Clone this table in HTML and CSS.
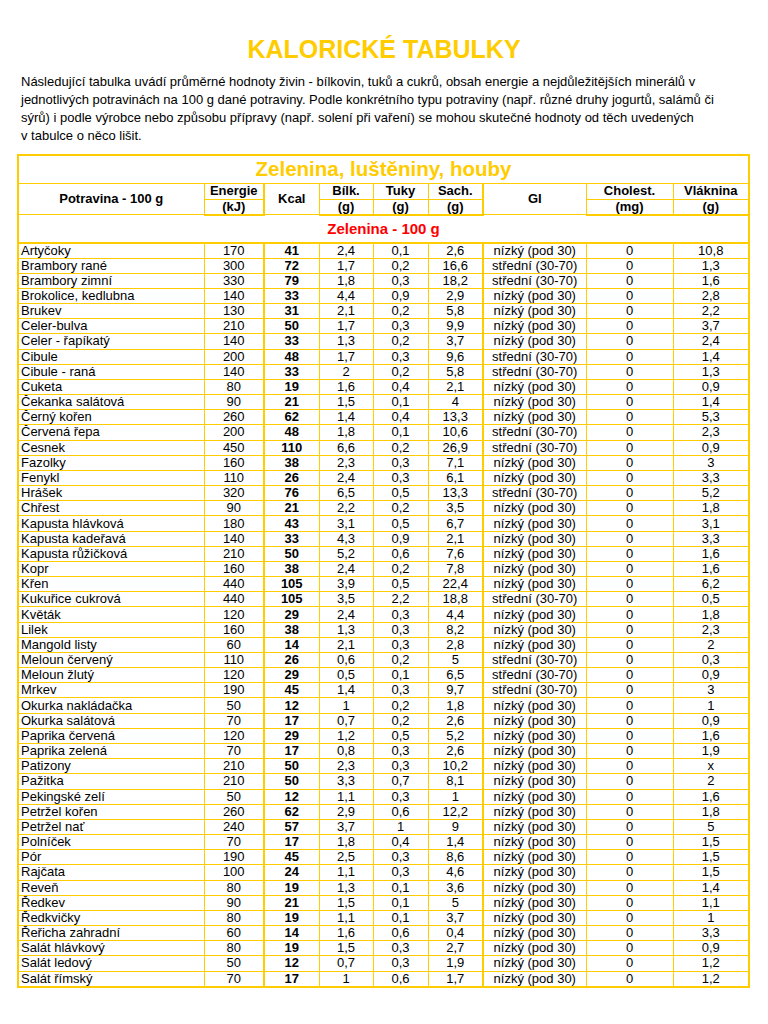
FILE: index.html
```html
<!DOCTYPE html>
<html lang="cs">
<head>
<meta charset="utf-8">
<title>Kalorické tabulky</title>
<link rel="stylesheet" href="styles.css">
</head>
<body>
<h1 class="title">KALORICKÉ TABULKY</h1>
<p class="intro">Následující tabulka uvádí průměrné hodnoty živin - bílkovin, tuků a cukrů, obsah energie a nejdůležitějších minerálů v<br>jednotlivých potravinách na 100 g dané potraviny. Podle konkrétního typu potraviny (např. různé druhy jogurtů, salámů či<br>sýrů) i podle výrobce nebo způsobu přípravy (např. solení při vaření) se mohou skutečné hodnoty od těch uvedených<br>v tabulce o něco lišit.</p>
<table class="food">
<colgroup>
<col class="c-name"><col class="c-kj"><col class="c-kcal"><col class="c-b"><col class="c-t"><col class="c-s"><col class="c-gi"><col class="c-ch"><col class="c-vl">
</colgroup>
<thead>
<tr class="cap-row"><th colspan="9" class="cap">Zelenina, luštěniny, houby</th></tr>
<tr class="h1-row">
<th rowspan="2">Potravina - 100 g</th>
<th class="thick">Energie</th>
<th rowspan="2">Kcal</th>
<th>Bílk.</th>
<th>Tuky</th>
<th class="thick">Sach.</th>
<th rowspan="2">GI</th>
<th>Cholest.</th>
<th>Vláknina</th>
</tr>
<tr class="h2-row">
<th class="thick">(kJ)</th>
<th>(g)</th>
<th>(g)</th>
<th class="thick">(g)</th>
<th>(mg)</th>
<th>(g)</th>
</tr>
</thead>
<tbody>
<tr class="sec-row"><td colspan="9" class="sec">Zelenina - 100 g</td></tr>
<tr><td class="n">Artyčoky</td><td class="thick">170</td><td class="b">41</td><td>2,4</td><td>0,1</td><td class="thick">2,6</td><td>nízký (pod 30)</td><td>0</td><td>10,8</td></tr>
<tr><td class="n">Brambory rané</td><td class="thick">300</td><td class="b">72</td><td>1,7</td><td>0,2</td><td class="thick">16,6</td><td>střední (30-70)</td><td>0</td><td>1,3</td></tr>
<tr><td class="n">Brambory zimní</td><td class="thick">330</td><td class="b">79</td><td>1,8</td><td>0,3</td><td class="thick">18,2</td><td>střední (30-70)</td><td>0</td><td>1,6</td></tr>
<tr><td class="n">Brokolice, kedlubna</td><td class="thick">140</td><td class="b">33</td><td>4,4</td><td>0,9</td><td class="thick">2,9</td><td>nízký (pod 30)</td><td>0</td><td>2,8</td></tr>
<tr><td class="n">Brukev</td><td class="thick">130</td><td class="b">31</td><td>2,1</td><td>0,2</td><td class="thick">5,8</td><td>nízký (pod 30)</td><td>0</td><td>2,2</td></tr>
<tr><td class="n">Celer-bulva</td><td class="thick">210</td><td class="b">50</td><td>1,7</td><td>0,3</td><td class="thick">9,9</td><td>nízký (pod 30)</td><td>0</td><td>3,7</td></tr>
<tr><td class="n">Celer - řapíkatý</td><td class="thick">140</td><td class="b">33</td><td>1,3</td><td>0,2</td><td class="thick">3,7</td><td>nízký (pod 30)</td><td>0</td><td>2,4</td></tr>
<tr><td class="n">Cibule</td><td class="thick">200</td><td class="b">48</td><td>1,7</td><td>0,3</td><td class="thick">9,6</td><td>střední (30-70)</td><td>0</td><td>1,4</td></tr>
<tr><td class="n">Cibule - raná</td><td class="thick">140</td><td class="b">33</td><td>2</td><td>0,2</td><td class="thick">5,8</td><td>střední (30-70)</td><td>0</td><td>1,3</td></tr>
<tr><td class="n">Cuketa</td><td class="thick">80</td><td class="b">19</td><td>1,6</td><td>0,4</td><td class="thick">2,1</td><td>nízký (pod 30)</td><td>0</td><td>0,9</td></tr>
<tr><td class="n">Čekanka salátová</td><td class="thick">90</td><td class="b">21</td><td>1,5</td><td>0,1</td><td class="thick">4</td><td>nízký (pod 30)</td><td>0</td><td>1,4</td></tr>
<tr><td class="n">Černý kořen</td><td class="thick">260</td><td class="b">62</td><td>1,4</td><td>0,4</td><td class="thick">13,3</td><td>nízký (pod 30)</td><td>0</td><td>5,3</td></tr>
<tr><td class="n">Červená řepa</td><td class="thick">200</td><td class="b">48</td><td>1,8</td><td>0,1</td><td class="thick">10,6</td><td>střední (30-70)</td><td>0</td><td>2,3</td></tr>
<tr><td class="n">Cesnek</td><td class="thick">450</td><td class="b">110</td><td>6,6</td><td>0,2</td><td class="thick">26,9</td><td>střední (30-70)</td><td>0</td><td>0,9</td></tr>
<tr><td class="n">Fazolky</td><td class="thick">160</td><td class="b">38</td><td>2,3</td><td>0,3</td><td class="thick">7,1</td><td>nízký (pod 30)</td><td>0</td><td>3</td></tr>
<tr><td class="n">Fenykl</td><td class="thick">110</td><td class="b">26</td><td>2,4</td><td>0,3</td><td class="thick">6,1</td><td>nízký (pod 30)</td><td>0</td><td>3,3</td></tr>
<tr><td class="n">Hrášek</td><td class="thick">320</td><td class="b">76</td><td>6,5</td><td>0,5</td><td class="thick">13,3</td><td>střední (30-70)</td><td>0</td><td>5,2</td></tr>
<tr><td class="n">Chřest</td><td class="thick">90</td><td class="b">21</td><td>2,2</td><td>0,2</td><td class="thick">3,5</td><td>nízký (pod 30)</td><td>0</td><td>1,8</td></tr>
<tr><td class="n">Kapusta hlávková</td><td class="thick">180</td><td class="b">43</td><td>3,1</td><td>0,5</td><td class="thick">6,7</td><td>nízký (pod 30)</td><td>0</td><td>3,1</td></tr>
<tr><td class="n">Kapusta kadeřavá</td><td class="thick">140</td><td class="b">33</td><td>4,3</td><td>0,9</td><td class="thick">2,1</td><td>nízký (pod 30)</td><td>0</td><td>3,3</td></tr>
<tr><td class="n">Kapusta růžičková</td><td class="thick">210</td><td class="b">50</td><td>5,2</td><td>0,6</td><td class="thick">7,6</td><td>nízký (pod 30)</td><td>0</td><td>1,6</td></tr>
<tr><td class="n">Kopr</td><td class="thick">160</td><td class="b">38</td><td>2,4</td><td>0,2</td><td class="thick">7,8</td><td>nízký (pod 30)</td><td>0</td><td>1,6</td></tr>
<tr><td class="n">Křen</td><td class="thick">440</td><td class="b">105</td><td>3,9</td><td>0,5</td><td class="thick">22,4</td><td>nízký (pod 30)</td><td>0</td><td>6,2</td></tr>
<tr><td class="n">Kukuřice cukrová</td><td class="thick">440</td><td class="b">105</td><td>3,5</td><td>2,2</td><td class="thick">18,8</td><td>střední (30-70)</td><td>0</td><td>0,5</td></tr>
<tr><td class="n">Květák</td><td class="thick">120</td><td class="b">29</td><td>2,4</td><td>0,3</td><td class="thick">4,4</td><td>nízký (pod 30)</td><td>0</td><td>1,8</td></tr>
<tr><td class="n">Lilek</td><td class="thick">160</td><td class="b">38</td><td>1,3</td><td>0,3</td><td class="thick">8,2</td><td>nízký (pod 30)</td><td>0</td><td>2,3</td></tr>
<tr><td class="n">Mangold listy</td><td class="thick">60</td><td class="b">14</td><td>2,1</td><td>0,3</td><td class="thick">2,8</td><td>nízký (pod 30)</td><td>0</td><td>2</td></tr>
<tr><td class="n">Meloun červený</td><td class="thick">110</td><td class="b">26</td><td>0,6</td><td>0,2</td><td class="thick">5</td><td>střední (30-70)</td><td>0</td><td>0,3</td></tr>
<tr><td class="n">Meloun žlutý</td><td class="thick">120</td><td class="b">29</td><td>0,5</td><td>0,1</td><td class="thick">6,5</td><td>střední (30-70)</td><td>0</td><td>0,9</td></tr>
<tr><td class="n">Mrkev</td><td class="thick">190</td><td class="b">45</td><td>1,4</td><td>0,3</td><td class="thick">9,7</td><td>střední (30-70)</td><td>0</td><td>3</td></tr>
<tr><td class="n">Okurka nakládačka</td><td class="thick">50</td><td class="b">12</td><td>1</td><td>0,2</td><td class="thick">1,8</td><td>nízký (pod 30)</td><td>0</td><td>1</td></tr>
<tr><td class="n">Okurka salátová</td><td class="thick">70</td><td class="b">17</td><td>0,7</td><td>0,2</td><td class="thick">2,6</td><td>nízký (pod 30)</td><td>0</td><td>0,9</td></tr>
<tr><td class="n">Paprika červená</td><td class="thick">120</td><td class="b">29</td><td>1,2</td><td>0,5</td><td class="thick">5,2</td><td>nízký (pod 30)</td><td>0</td><td>1,6</td></tr>
<tr><td class="n">Paprika zelená</td><td class="thick">70</td><td class="b">17</td><td>0,8</td><td>0,3</td><td class="thick">2,6</td><td>nízký (pod 30)</td><td>0</td><td>1,9</td></tr>
<tr><td class="n">Patizony</td><td class="thick">210</td><td class="b">50</td><td>2,3</td><td>0,3</td><td class="thick">10,2</td><td>nízký (pod 30)</td><td>0</td><td>x</td></tr>
<tr><td class="n">Pažitka</td><td class="thick">210</td><td class="b">50</td><td>3,3</td><td>0,7</td><td class="thick">8,1</td><td>nízký (pod 30)</td><td>0</td><td>2</td></tr>
<tr><td class="n">Pekingské zelí</td><td class="thick">50</td><td class="b">12</td><td>1,1</td><td>0,3</td><td class="thick">1</td><td>nízký (pod 30)</td><td>0</td><td>1,6</td></tr>
<tr><td class="n">Petržel kořen</td><td class="thick">260</td><td class="b">62</td><td>2,9</td><td>0,6</td><td class="thick">12,2</td><td>nízký (pod 30)</td><td>0</td><td>1,8</td></tr>
<tr><td class="n">Petržel nať</td><td class="thick">240</td><td class="b">57</td><td>3,7</td><td>1</td><td class="thick">9</td><td>nízký (pod 30)</td><td>0</td><td>5</td></tr>
<tr><td class="n">Polníček</td><td class="thick">70</td><td class="b">17</td><td>1,8</td><td>0,4</td><td class="thick">1,4</td><td>nízký (pod 30)</td><td>0</td><td>1,5</td></tr>
<tr><td class="n">Pór</td><td class="thick">190</td><td class="b">45</td><td>2,5</td><td>0,3</td><td class="thick">8,6</td><td>nízký (pod 30)</td><td>0</td><td>1,5</td></tr>
<tr><td class="n">Rajčata</td><td class="thick">100</td><td class="b">24</td><td>1,1</td><td>0,3</td><td class="thick">4,6</td><td>nízký (pod 30)</td><td>0</td><td>1,5</td></tr>
<tr><td class="n">Reveň</td><td class="thick">80</td><td class="b">19</td><td>1,3</td><td>0,1</td><td class="thick">3,6</td><td>nízký (pod 30)</td><td>0</td><td>1,4</td></tr>
<tr><td class="n">Ředkev</td><td class="thick">90</td><td class="b">21</td><td>1,5</td><td>0,1</td><td class="thick">5</td><td>nízký (pod 30)</td><td>0</td><td>1,1</td></tr>
<tr><td class="n">Ředkvičky</td><td class="thick">80</td><td class="b">19</td><td>1,1</td><td>0,1</td><td class="thick">3,7</td><td>nízký (pod 30)</td><td>0</td><td>1</td></tr>
<tr><td class="n">Řeřicha zahradní</td><td class="thick">60</td><td class="b">14</td><td>1,6</td><td>0,6</td><td class="thick">0,4</td><td>nízký (pod 30)</td><td>0</td><td>3,3</td></tr>
<tr><td class="n">Salát hlávkový</td><td class="thick">80</td><td class="b">19</td><td>1,5</td><td>0,3</td><td class="thick">2,7</td><td>nízký (pod 30)</td><td>0</td><td>0,9</td></tr>
<tr><td class="n">Salát ledový</td><td class="thick">50</td><td class="b">12</td><td>0,7</td><td>0,3</td><td class="thick">1,9</td><td>nízký (pod 30)</td><td>0</td><td>1,2</td></tr>
<tr><td class="n">Salát římský</td><td class="thick">70</td><td class="b">17</td><td>1</td><td>0,6</td><td class="thick">1,7</td><td>nízký (pod 30)</td><td>0</td><td>1,2</td></tr>
</tbody>
</table>
</body>
</html>
```
FILE: styles.css
```css
html, body {
  margin: 0;
  padding: 0;
  background: #ffffff;
}
body {
  font-family: "Liberation Sans", Arial, sans-serif;
  color: #000000;
}
.title {
  margin: 34px 0 0 0;
  font-size: 25px;
  line-height: 30px;
  font-weight: bold;
  color: #ffcc00;
  text-align: center;
}
.intro {
  margin: 9px 0 0 21px;
  font-size: 13px;
  line-height: 18px;
  white-space: nowrap;
}
.food {
  margin: 9px 0 0 17px;
  width: 731px;
  border-collapse: collapse;
  table-layout: fixed;
  border: 2px solid #ffcc00;
  font-size: 13px;
}
.c-name { width: 186px; }
.c-kj { width: 60px; }
.c-kcal { width: 55px; }
.c-b { width: 54px; }
.c-t { width: 55px; }
.c-s { width: 55px; }
.c-gi { width: 103px; }
.c-ch { width: 87px; }
.c-vl { width: 76px; }
.food th, .food td {
  border: 1px solid #ffcc00;
  padding: 0;
  text-align: center;
  vertical-align: middle;
  line-height: 14px;
  white-space: nowrap;
  overflow: hidden;
}
.food th {
  font-weight: bold;
}
.food .thick {
  border-right: 2px solid #ffcc00;
}
.cap-row { height: 28px; }
.food .cap {
  font-size: 20.5px;
  line-height: 24px;
  color: #ffcc00;
}
.h1-row { height: 16px; }
.h2-row { height: 15px; }
.h2-row th { border-bottom: 2px solid #ffcc00; }
.food tbody tr { height: 15.18px; }
.food tbody .sec-row { height: 28px; }
.food .sec {
  color: #ff0000;
  font-weight: bold;
  font-size: 15px;
  line-height: 18px;
  border-bottom: 2px solid #ffcc00;
}
.food .n {
  text-align: left;
  padding-left: 2px;
}
.food .b {
  font-weight: bold;
}
```
